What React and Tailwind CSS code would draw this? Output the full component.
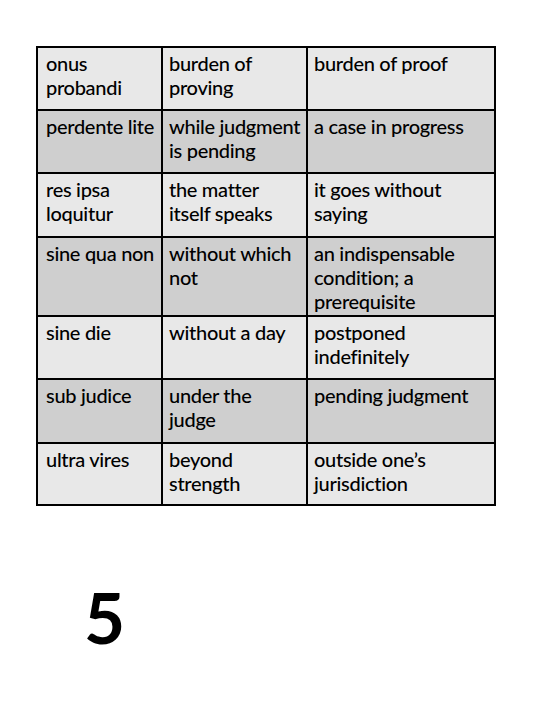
const rows = [
  { h: 'h-[61px]', bg: 'bg-[#e8e8e8]', cells: [['onus', 'probandi'], ['burden of', 'proving'], ['burden of proof']] },
  { h: 'h-[63px]', bg: 'bg-[#cfcfcf]', cells: [['perdente lite'], ['while judgment', 'is pending'], ['a case in progress']] },
  { h: 'h-[64px]', bg: 'bg-[#e8e8e8]', cells: [['res ipsa', 'loquitur'], ['the matter', 'itself speaks'], ['it goes without', 'saying']] },
  { h: 'h-[79px]', bg: 'bg-[#cfcfcf]', cells: [['sine qua non'], ['without which', 'not'], ['an indispensable', 'condition; a', 'prerequisite']] },
  { h: 'h-[63px]', bg: 'bg-[#e8e8e8]', cells: [['sine die'], ['without a day'], ['postponed', 'indefinitely']] },
  { h: 'h-[64px]', bg: 'bg-[#cfcfcf]', cells: [['sub judice'], ['under the', 'judge'], ['pending judgment']] },
  { h: 'h-[62px]', bg: 'bg-[#e8e8e8]', cells: [['ultra vires'], ['beyond', 'strength'], ['outside one\u2019s', 'jurisdiction']] },
];

const Cell = ({ lines, first }) => (
  <div className={`pt-[3px] ${first ? 'pl-2' : 'pl-[6px] border-l-2 border-black'}`}>
    {lines.map((l, i) => (
      <div key={i} className="whitespace-nowrap">{l}</div>
    ))}
  </div>
);

export default function App() {
  return (
    <div
      className="w-[540px] h-[720px] bg-white text-black pt-[46px] pl-[36px]"
      style={{ fontFamily: 'Lato, "Open Sans", sans-serif' }}
    >
      <div className="w-[460px] border-2 border-black text-[20px] leading-[24px] font-medium tracking-[-0.3px]">
        {rows.map((r, i) => (
          <div
            key={i}
            className={`grid grid-cols-[123px_145px_188px] ${r.h} ${r.bg} ${i > 0 ? 'border-t-2 border-black' : ''}`}
          >
            {r.cells.map((c, j) => (
              <Cell key={j} lines={c} first={j === 0} />
            ))}
          </div>
        ))}
      </div>
      <div className="mt-[75px] ml-[48px] text-[71px] leading-[71px] font-bold">5</div>
    </div>
  );
}
